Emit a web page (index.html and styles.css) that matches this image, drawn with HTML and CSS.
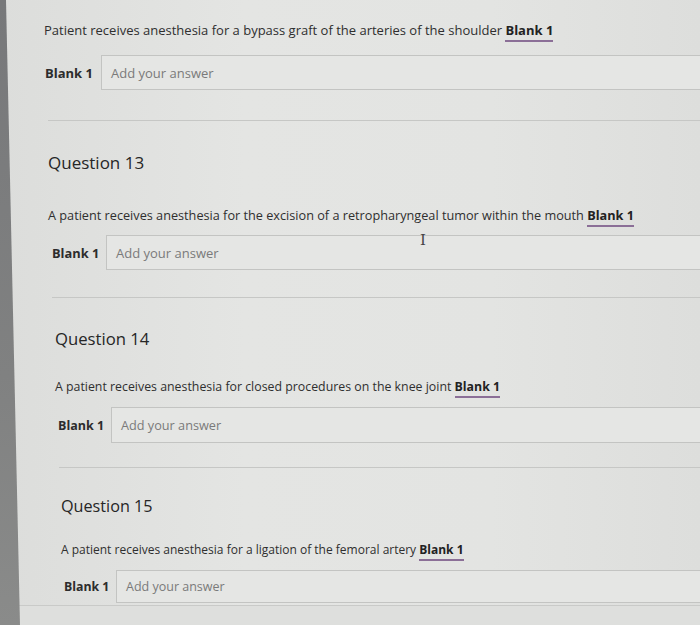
FILE: index.html
```html
<!DOCTYPE html>
<html lang="en">
<head>
<meta charset="utf-8">
<title>Quiz</title>
<link rel="stylesheet" href="styles.css">
</head>
<body>
<div class="screen">
  <div class="bezel"></div>
  <main class="form">
    <section class="q q0">
      <p class="q-text">Patient receives anesthesia for a bypass graft of the arteries of the shoulder <span class="blank">Blank 1</span></p>
      <div class="answer"><span class="answer-label">Blank 1</span><div class="answer-input">Add your answer</div></div>
      <hr class="rule">
    </section>
    <section class="q q1">
      <h2 class="q-title">Question 13</h2>
      <p class="q-text">A patient receives anesthesia for the excision of a retropharyngeal tumor within the mouth <span class="blank">Blank 1</span></p>
      <div class="answer"><span class="answer-label">Blank 1</span><div class="answer-input">Add your answer<span class="cursor">I</span></div></div>
      <hr class="rule">
    </section>
    <section class="q q2">
      <h2 class="q-title">Question 14</h2>
      <p class="q-text">A patient receives anesthesia for closed procedures on the knee joint <span class="blank">Blank 1</span></p>
      <div class="answer"><span class="answer-label">Blank 1</span><div class="answer-input">Add your answer</div></div>
      <hr class="rule">
    </section>
    <section class="q q3">
      <h2 class="q-title">Question 15</h2>
      <p class="q-text">A patient receives anesthesia for a ligation of the femoral artery <span class="blank">Blank 1</span></p>
      <div class="answer"><span class="answer-label">Blank 1</span><div class="answer-input">Add your answer</div></div>
    </section>
    <div class="footer-band"></div>
  </main>
</div>
</body>
</html>
```

FILE: styles.css
```css
* { box-sizing: border-box; }
html, body { margin: 0; padding: 0; }
body {
  width: 700px;
  height: 625px;
  overflow: hidden;
  font-family: "Open Sans", "Noto Sans", sans-serif;
  color: #333;
  background: linear-gradient(90deg, #dcdddb 0%, #e4e5e3 35%, #e3e4e2 70%, #dddedc 100%);
}
.screen {
  display: flex;
  height: 625px;
}
.bezel {
  flex: 0 0 22px;
  height: 625px;
  background: linear-gradient(180deg, #77787a 0%, #808181 60%, #8a8b8a 100%);
  clip-path: polygon(0 0, 6px 0, 20px 100%, 0 100%);
  margin-right: -22px;
  position: relative;
  z-index: 1;
}
.form {
  flex: 1;
  display: flex;
  flex-direction: column;
}
.q {
  padding-left: var(--left);
}
.q0 { --left: 44px; padding-top: 20px; }
.q1 { --left: 48px; }
.q2 { --left: 55px; }
.q3 { --left: 61px; }

.q-title {
  margin: 0;
  font-size: 17px;
  line-height: 24px;
  font-weight: 400;
  color: #262626;
}
.q-text {
  margin: 0;
  font-size: 13px;
  line-height: 20px;
  color: #2f2f2f;
  white-space: nowrap;
}
.blank {
  font-weight: 700;
  color: #222;
  border-bottom: 2px solid #8b6f97;
  padding-bottom: 1px;
}
.answer {
  display: flex;
  align-items: center;
  margin-top: 10px;
  margin-left: 1px;
}
.answer-label {
  flex: 0 0 auto;
  width: 56px;
  font-size: 13px;
  font-weight: 700;
  color: #2c2c2c;
}
.answer-input {
  position: relative;
  flex: 1;
  height: 35px;
  display: flex;
  align-items: center;
  padding-left: 9px;
  font-size: 13px;
  color: #7a7a7a;
  background: #e5e6e4;
  border: 1px solid #c3c4c2;
  border-right: 0;
}
.cursor {
  position: absolute;
  left: 313px;
  top: -5px;
  font-family: "DejaVu Serif", serif;
  font-size: 15px;
  color: #444;
}
.rule {
  margin: 27px 0 0 4px;
  border: 0;
  border-top: 1px solid #c6c7c5;
  height: 0;
}

.q0 .answer { margin-top: 15px; }
.q0 .rule { margin-top: 30px; }

.q1 .q-title { margin-top: 30px; }
.q1 .q-text { margin-top: 30px; font-size: 12.7px; }
.q1 .answer { margin-left: 4px; }
.q1 .answer-label { width: 54px; font-size: 12.8px; }
.q1 .rule { margin-top: 27px; }

.q2 .q-title { margin-top: 29px; font-size: 16.7px; }
.q2 .q-text { margin-top: 26px; font-size: 12.35px; }
.q2 .answer { margin-left: 3px; }
.q2 .answer-label { width: 53px; font-size: 12.5px; }
.q2 .answer-input { height: 36px; font-size: 12.7px; }
.q2 .rule { margin-top: 24px; }

.q3 .q-title { margin-top: 26px; font-size: 16.2px; }
.q3 .q-text { margin-top: 22px; font-size: 12px; }
.q3 .answer { margin-left: 3px; }
.q3 .answer-label { width: 52px; font-size: 12.3px; }
.q3 .answer-input { height: 33px; font-size: 12.5px; }

.footer-band {
  flex: 1;
  margin-top: 2px;
  border-top: 1px solid #c9cac8;
  background: #dedfdd;
}
```
